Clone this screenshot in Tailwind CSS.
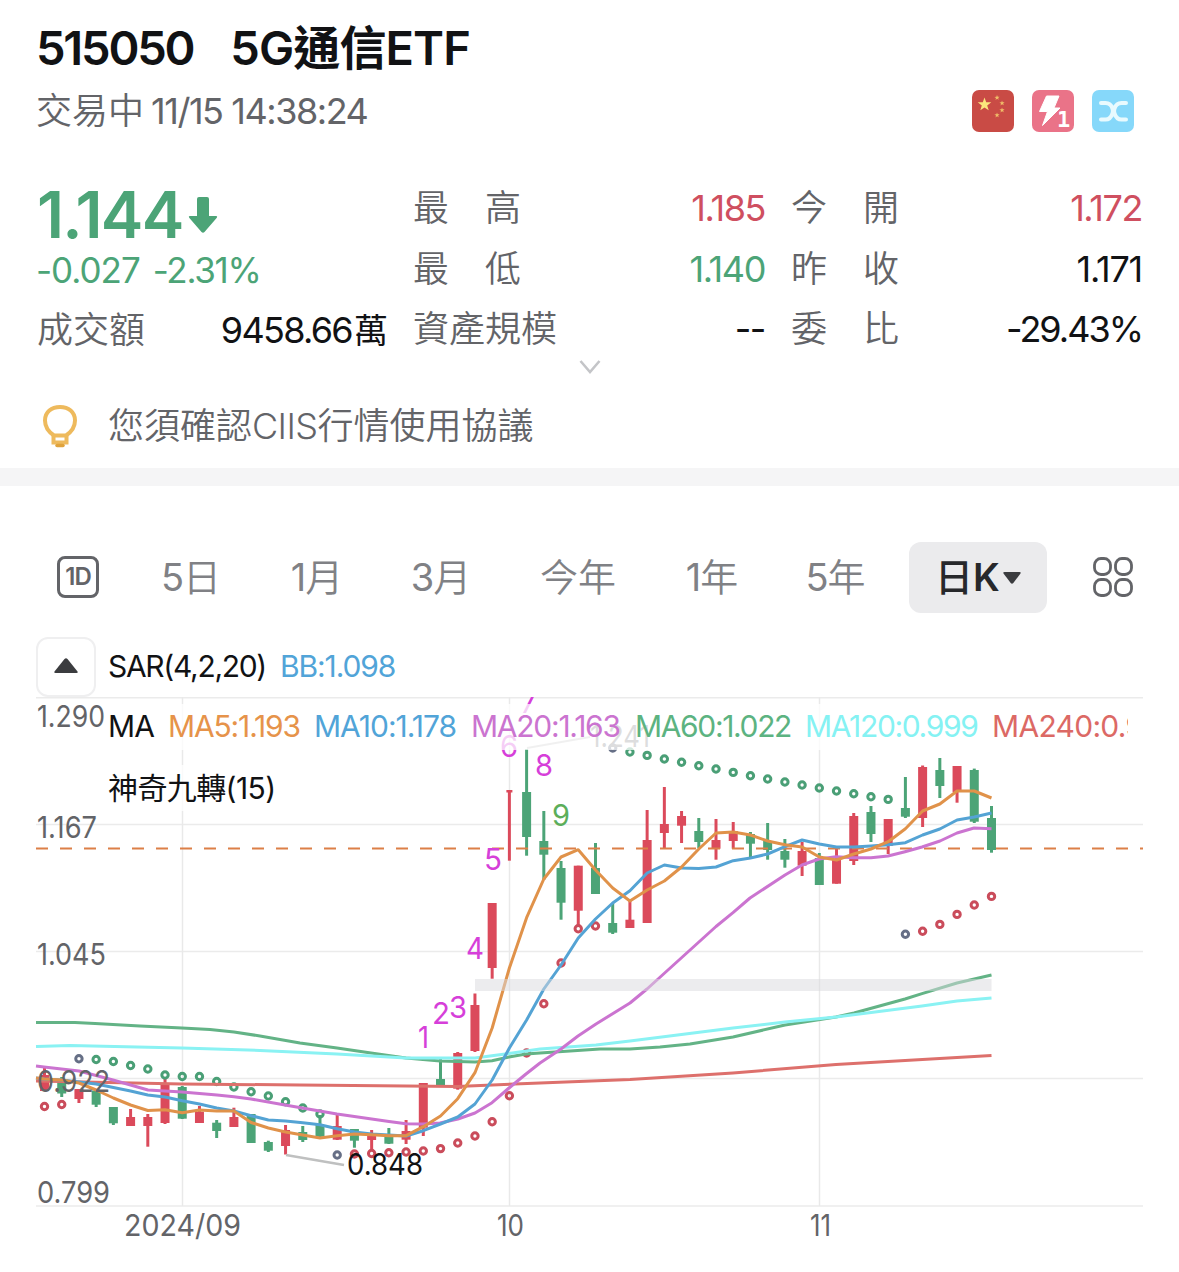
<!DOCTYPE html>
<html lang="zh-Hant">
<head>
    <meta charset="UTF-8">
    <meta name="viewport" content="width=device-width, initial-scale=1.0">
    <title>515050 5G通信ETF</title>
    <script src="https://cdn.jsdelivr.net/npm/@tailwindcss/browser@4"></script>
</head>
<body class="w-[1179px] h-[1272px] overflow-hidden bg-white text-[#111214] font-[Inter,'Noto_Sans_CJK_TC',sans-serif]">

    <!-- Header -->
    <header class="h-[178px] pt-[18px] pl-[36px] pr-[45px]">
      <h1 class="flex gap-[38px] h-[61px] items-center text-[47px] font-semibold whitespace-nowrap">
        <span class="tracking-[-2.2px]">515050</span>
        <span class="ml-[-1px] tracking-[-0.9px]">5G通信ETF</span>
      </h1>
      <div class="flex h-[64px] items-center justify-between">
        <p class="text-[36px] text-[#636468] whitespace-nowrap font-[350]">交易中<span class="ml-[7px] font-normal tracking-[-1.450px]">11/15 14:38:24</span></p>
        <div class="flex gap-[18px]">
          <svg class="size-[42px]" viewBox="0 0 42 42">
            <rect width="42" height="42" rx="7" fill="#c94b45"/>
            <path fill="#fbe67c" d="M12.500 7.500l1.700 4.800h5.100l-4.100 3.100 1.500 4.900-4.200-2.900-4.200 2.900 1.500-4.900-4.100-3.100h5.100z"/>
            <g fill="#f0bd68">
              <path d="M25 5l.7 1.800 1.900-.1-1.500 1.200.7 1.900-1.700-1-1.600 1.200.5-2-1.600-1.100 2-.1z"/>
              <path d="M30 10.500l.7 1.800 1.900-.1-1.500 1.200.7 1.900-1.700-1-1.600 1.200.5-2-1.600-1.100 2-.1z"/>
              <path d="M30 17.500l.7 1.800 1.900-.1-1.500 1.200.7 1.900-1.700-1-1.600 1.200.5-2-1.600-1.100 2-.1z"/>
              <path d="M25 22.500l.7 1.800 1.900-.1-1.500 1.200.7 1.900-1.700-1-1.600 1.200.5-2-1.600-1.100 2-.1z"/>
            </g>
          </svg>
          <svg class="size-[42px]" viewBox="0 0 42 42">
            <rect width="42" height="42" rx="7" fill="#ea7388"/>
            <path fill="#fff" stroke="#fff" stroke-width="1" stroke-linejoin="round" d="M14.500 6H27l-5 12h6L10.500 35.500 15.500 21.500H7.500z"/>
            <text x="25" y="37" font-size="22" font-weight="700" fill="#fff" font-family="DejaVu Sans Mono">1</text>
          </svg>
          <svg class="size-[42px]" viewBox="0 0 42 42" fill="none" stroke="#e9fafe" stroke-width="4" stroke-linecap="round">
            <rect width="42" height="42" rx="7" fill="#86d8fa" stroke="none"/>
            <path d="M9 13h4.500c4 0 6 2.500 7 5.500.6 1.700.6 3.300 0 5-1 3-3 6-7 6H9M34 13h-4.500c-4 0-6 2.500-7 5.500-.6 1.700-.6 3.300 0 5 1 3 3 6 7 6H34"/>
          </svg>
        </div>
      </div>
    </header>

    <!-- Quote -->
    <section class="grid grid-cols-[350px_352px_351px] gap-x-[26px] h-[182px] pl-[37px] text-[36px] whitespace-nowrap">
      <div class="flex flex-col">
        <div class="flex h-[62px] pt-[12px] items-center text-[#4ca477]">
          <span class="text-[64px] leading-none font-semibold tracking-[-1.700px]">1.144</span>
          <svg class="w-[30px] h-[36px] ml-[5px]" viewBox="0 0 28 36"><path fill="#4ca477" d="M8 2q0-2 2-2h8q2 0 2 2v17h7q2 0 .6 2L15.500 35q-1.500 1.500-3 0L.4 21q-1.400-2 .6-2h7z"/></svg>
        </div>
        <div class="flex h-[60px] items-center gap-[13px] ml-[-1px] text-[35px] text-[#4ca477]"><span class="tracking-[-1px]">-0.027</span><span class="tracking-[-1.300px]">-2.31%</span></div>
        <div class="flex h-[60px] items-center justify-between"><span class="text-[#636468] font-[350]">成交額</span><span class="mr-[-1px]"><span class="tracking-[-1.700px] mr-[2px]">9458.66</span><span class="text-[34px]">萬</span></span></div>
      </div>
      <div class="grid grid-rows-[60.5px_60.5px_60.5px] items-center">
        <div class="flex justify-between"><span class="text-[#636468] font-[350]">最　高</span><span class="text-[#cf4f60] tracking-[-1.4px]">1.185</span></div>
        <div class="flex justify-between"><span class="text-[#636468] font-[350]">最　低</span><span class="text-[#4ca477] tracking-[-1.4px]">1.140</span></div>
        <div class="flex justify-between"><span class="text-[#636468] font-[350]">資產規模</span><span class="tracking-[-1.4px]">--</span></div>
      </div>
      <div class="grid grid-rows-[60.5px_60.5px_60.5px] items-center">
        <div class="flex justify-between"><span class="text-[#636468] font-[350]">今　開</span><span class="text-[#cf4f60] tracking-[-1.4px]">1.172</span></div>
        <div class="flex justify-between"><span class="text-[#636468] font-[350]">昨　收</span><span class="tracking-[-1.2px]">1.171</span></div>
        <div class="flex justify-between"><span class="text-[#636468] font-[350]">委　比</span><span class="tracking-[-2px]">-29.43%</span></div>
      </div>
    </section>
    <div class="flex justify-center h-[18px]">
      <svg class="w-[22px] h-[14px]" viewBox="0 0 22 14" fill="none" stroke="#c4c5c8" stroke-width="2.600"><path d="M1.500 1l9.500 11L20.500 1"/></svg>
    </div>

    <!-- Notice -->
    <div class="flex h-[90px] items-center pl-[42px] pt-[5px] text-[36px] text-[#636468] font-[350]">
      <svg class="w-[36px] h-[44px] mr-[30px]" viewBox="0 0 36 44" fill="none" stroke="#eeba5d" stroke-width="4">
        <path d="M12 31.500C7.500 28.500 3 23.500 3 16.500 3 8 9.500 3 18 3s15 5 15 13.500c0 7-4.500 12-9 15z" stroke-linejoin="round"/>
        <path d="M11.500 31v7.500h13V31"/><path d="M15 41.500h6" stroke-width="3.500" stroke="#e0a33c" stroke-linecap="round"/>
      </svg>
      <span class="whitespace-nowrap">您須確認<span class="tracking-[-0.600px]">CIIS</span>行情使用協議</span>
    </div>
    <div class="h-[18px] bg-[#f5f5f6]"></div>

    <!-- Period tabs -->
    <nav class="flex h-[71px] mt-[56px] pl-[57px] items-center text-[38px] text-[#808185] font-[350] whitespace-nowrap">
      <span class="flex size-[42px] mt-[-1px] mr-[28.500px] border-[3px] border-[#636468] rounded-[8px] items-center justify-center text-[24px] font-semibold tracking-[-1px] text-[#636468]">1D</span>
      <span class="w-[126px] text-center tracking-[-1px]"><span class="font-normal">5</span>日</span>
      <span class="w-[126px] text-center tracking-[-1px]"><span class="font-normal">1</span>月</span>
      <span class="w-[122px] text-center tracking-[-1px]"><span class="font-normal">3</span>月</span>
      <span class="w-[153px] text-center">今年</span>
      <span class="w-[114px] text-center tracking-[-1px]"><span class="font-normal">1</span>年</span>
      <span class="w-[133px] text-center tracking-[-1px]"><span class="font-normal">5</span>年</span>
      <span class="flex w-[138px] h-[71px] ml-[7.500px] items-center justify-center rounded-[12px] bg-[#ebebed] text-[#27282b] font-medium">日<span class="font-semibold tracking-[-1.500px]">K</span>
        <svg class="w-[18px] h-[12px] ml-[5px]" viewBox="0 0 18 12"><path fill="#3b3c3f" d="M1.500 0h15q2 0 .8 1.700l-7 9.300q-1.300 1.500-2.600 0l-7-9.300Q-.5 0 1.500 0z"/></svg>
      </span>
      <svg class="size-[40px] ml-[46px] mt-[-1px]" viewBox="0 0 40 40" fill="none" stroke="#636468" stroke-width="2.800">
        <rect x="1.500" y="1.500" width="16" height="16" rx="6.500"/><rect x="22.500" y="1.500" width="16" height="16" rx="6.500"/>
        <rect x="1.500" y="22.500" width="16" height="16" rx="6.500"/><rect x="22.500" y="22.500" width="16" height="16" rx="6.500"/>
      </svg>
    </nav>

    <!-- Indicator line -->
    <div class="flex h-[60px] mt-[24px] pl-[36px] items-center text-[30px] whitespace-nowrap">
      <span class="flex w-[60px] h-[60px] mr-[12px] border-2 border-[#efeff0] rounded-[12px] items-center justify-center">
        <svg class="w-[24px] h-[15px] mt-[-3px]" viewBox="0 0 24 15"><path fill="#3b3c3f" d="M1.500 15h21q2 0 .8-1.700L13.500 1Q12 -.5 10.500 1L.7 13.300Q-.5 15 1.500 15z"/></svg>
      </span>
      <span class="w-[172px] pb-[2px] tracking-[-1.300px]">SAR(4,2,20)</span>
      <span class="pb-[2px] tracking-[-1.100px] text-[#51a4d8]">BB:1.098</span>
    </div>

    <!-- Chart -->
    <div class="relative h-[575px]">
      <svg id="chart" class="block w-[1179px] h-[575px]" viewBox="0 697 1179 575"></svg>
      <div class="absolute left-[108px] top-[7px] flex w-[1020px] h-[46px] pb-[2px] gap-[14px] items-center overflow-hidden bg-white/75 text-[30px] whitespace-nowrap">
        <span class="w-[46px] shrink-0 tracking-[-0.800px]">MA</span>
        <span class="w-[132px] shrink-0 tracking-[-1.150px] text-[#e6934a]">MA5:1.193</span>
        <span class="w-[143px] shrink-0 tracking-[-1px] text-[#51a4d8]">MA10:1.178</span>
        <span class="w-[150px] shrink-0 tracking-[-1.250px] text-[#cb74d0]">MA20:1.163</span>
        <span class="w-[156px] shrink-0 tracking-[-1.350px] text-[#5cb381]">MA60:1.022</span>
        <span class="w-[173px] shrink-0 tracking-[-1.350px] text-[#85f2f3]">MA120:0.999</span>
        <span class="w-[173px] shrink-0 tracking-[-0.700px] text-[#dc6965]">MA240:0.955</span>
      </div>
      <div class="absolute left-[108px] top-[68px] h-[46px] leading-[46px] bg-white/75 text-[30px] tracking-[-0.600px] whitespace-nowrap">神奇九轉(15)</div>
    </div>

    <script>
        const RED = "#db4a5b", GREEN = "#4ca477", SLATE = "#666f86";
        const xAt = i => 44.5 + i * 17.218;

        // [up?, wick top, body top, body bottom, wick bottom]
        const candles = [
          [1,1068,1075,1091,1091],[0,1077,1081,1093.5,1097],[1,1089,1089,1099,1103],[0,1090,1090.5,1104.7,1107],
          [0,1107,1107,1123.3,1125],[1,1109,1117,1126,1126],[1,1114,1117,1126,1146.7],[1,1079,1084,1123,1124],
          [0,1086,1087,1118.7,1119],[1,1106,1111.7,1123,1123],[0,1120,1122.7,1131,1138],[1,1107.7,1117,1127,1127],
          [0,1114,1114,1143,1143],[0,1140.7,1142,1150.7,1152],[1,1125,1130,1146,1154.5],[0,1126,1132,1140,1142],
          [0,1115,1125,1136.7,1137],[1,1115,1126,1139.7,1140],[0,1129,1129,1140.7,1147.7],[1,1130,1135,1140,1151],
          [0,1128,1135,1143.7,1144],[1,1120,1131,1139.7,1144],[1,1083,1083,1127.7,1136],[0,1059,1079,1087,1087],
          [1,1052,1053,1088.7,1089.7],[1,993.5,1005,1051,1052],[1,903,903,968,978.7],[1,790,790,792.5,860.7],
          [0,749,792,837,855.7],[0,811,841,854.7,880],[0,861,868,902.7,919.7],[1,865.7,865.7,910.7,925],
          [0,843,868,894,894],[0,903,923,932.7,934],[1,901,919.7,928,928],[1,810,840,923,923],
          [1,787,824,833,849],[1,811,816,825.7,843],[0,818,831,842,848],[1,819,840,848.7,859.7],
          [1,822,831,841,848.7],[0,832,834,843.7,858],[0,823,841,850,859.7],[0,839,851,859.7,867.7],
          [1,842,851,865.7,876],[0,853,858,885,885],[1,849,859,883.7,883.7],[1,813,816,861,865],
          [0,806,812,834,842],[1,819,819,846,854],[0,777,808,816.7,818],[1,765.5,767,818,827],
          [0,758,770,786,798],[1,766,766,792,802.7],[0,768.6,770,821.7,823],[0,806,818,850,852.7]
        ];

        // parabolic SAR, one value per candle
        const sar = [
          1106.5,1104.5,1058.7,1059.5,1061.5,1065.5,1069,1075,1076.5,1076.5,1081.5,1087,1091.8,1096,1101.7,1108,1114,
          1155,1154,1153.5,1152.7,1152,1151,1148.6,1143,1136,1121.7,1095.7,1053,1003.7,963,928.7,926,
          748,752,755.4,759,762.3,765.7,769,772.4,775.7,779,782,785,788,791,793.7,796.7,799.4,
          934.3,931.3,924.4,914.4,905,896.4
        ];
        const flips = [2, 17, 33, 50];
        const sarColor = i => {
          if (flips.includes(i)) return SLATE;
          return (i > 2 && i < 17) || (i > 33 && i < 50) ? "#4a9f76" : "#ca4c5b";
        };

        const ma5 = [1079,1080,1083,1090,1098,1105,1110.5,1109.7,1112.7,1110,1111,1111,1122.5,1128,1132,1135,1138,1135.7,1134,1134.7,1135.7,1135.7,1126.7,1116,1098.7,1072.7,1028,968,917.7,879,857,849.7,870,888,901,890,881,867,849,833,832,835,841,844.7,847,857,860,854,849,841.7,828.7,811,804,791,791,798];
        const ma10 = [1079,1080,1082,1084,1087.5,1091,1095,1097,1100.7,1104,1108,1111,1115.7,1120,1121,1122.7,1124.7,1128.7,1132,1134,1135,1136,1130.7,1124,1117,1104,1080,1048,1020,989,965,938,919,903,890.7,873,865,868,868.5,867,860.7,858,854,846.7,840,844,847,847,846,844.7,842.7,835,829,820,817,813];
        const toPoints = a => a.map((y, i) => xAt(i) + "," + y).join(" ");

        const lines = [
          ["#dd706c", "36,1081 182,1084 300,1085 406,1086 457,1086.5 540,1083 630,1079.5 733,1073 836,1064.5 991.5,1055.5"],
          ["#63b386", "36,1022.5 75,1022.5 95,1023.5 140,1026 182,1028 210,1029.5 234,1032 260,1036 300,1043 337,1048 371,1053 406,1058 440,1061 475,1062 492,1060.7 509,1057 526,1054 540,1053 600,1049 630,1049 660,1047 690,1044 733,1037 785,1025 836,1017 854,1013 905,999 922,993.6 957,983 991.5,975"],
          ["#8af2f3", "36,1046.5 70,1045.5 182,1048 260,1050.5 337,1054 406,1058 475,1058 509,1053.5 540,1049 596,1045 630,1041 733,1028 785,1022 836,1017 922,1006 957,1001 991.5,998"],
          ["#cb74d0", "36,1066 44,1067 79,1071 113,1080 148,1090 182,1092 217,1095 234,1096.7 251,1099 285,1105 337,1114 389,1121.5 406,1123.7 423,1124 440,1123 458,1119 475,1113 492,1102.7 509,1088 526,1074 540,1063 561,1049 578,1036 596,1024 630,1003 647,989 700,941 716,926.5 733,912.7 750,898 785,875 802,865 819,859 836,856.7 854,857.7 871,857.7 888,856 905,851.7 922,847 940,841 957,833 974,828 991.5,828.7"],
          ["#54a3d4", "36,1078 " + toPoints(ma10)],
          ["#e0924a", "36,1078 " + toPoints(ma5)]
        ];

        let svg = "";

        // grid
        [697, 824.5, 951.5, 1078.5, 1206].forEach(y => { svg += `<path d="M36 ${y}H1143" stroke="#ebebeb" stroke-width="${y === 697 ? 3 : 1.5}"/>`; });
        [182.5, 509.5, 819.5].forEach(x => { svg += `<path d="M${x} 697V1206" stroke="#e9e9e9" stroke-width="1.5"/>`; });

        candles.forEach(([up, wt, bt, bb, wb], i) => {
          const x = xAt(i), c = up ? RED : GREEN, w = i === 27 ? 6 : 9;
          svg += `<path d="M${x} ${wt}V${wb}" stroke="${c}" stroke-width="3"/><rect x="${x - w / 2}" y="${bt}" width="${w}" height="${bb - bt}" fill="${c}"/>`;
        });
        sar.forEach((y, i) => { svg += `<circle cx="${xAt(i)}" cy="${y}" r="3.2" fill="none" stroke="${sarColor(i)}" stroke-width="3"/>`; });
        svg += `<path d="M36 848.5H1143" stroke="#dc7f47" stroke-width="2.2" stroke-dasharray="12 12"/>`;
        lines.forEach(([c, p]) => { svg += `<polyline points="${p}" fill="none" stroke="${c}" stroke-width="3" stroke-linejoin="round"/>`; });

        // gap band
        svg += `<rect x="475" y="979" width="516.5" height="12" fill="#d9d9dd" fill-opacity=".5"/>`;
        // high / low pointers
        svg += `<path d="M286 1155L344 1165" stroke="#bfc0c0" stroke-width="2.5"/><path d="M527 748L590 737" stroke="#c4c4c4" stroke-width="2"/>`;

        // [text, x, baseline, width, colour]
        const labels = [
          ["1.290",37,727,68,"#636468"],["1.167",37,838,60,"#636468"],["1.045",37,965,69,"#636468"],["0.922",37,1092,73,"#636468"],["0.799",37,1203,73,"#636468"],
          ["2024/09",124,1236,117,"#636468"],["10",497,1236,27,"#636468"],["11",810,1236,21,"#636468"],
          ["0.848",347,1175,76,"#111214"],["1.241",590,747,60,"#77797c"],
          ["1",418,1048,11,"#d63fd9"],["2",432,1024,18,"#d63fd9"],["3",449,1018,18,"#d63fd9"],["4",466,959,18,"#d63fd9"],["5",484,870,18,"#d63fd9"],
          ["6",500,757,18,"#d63fd9"],["7",520,713,17,"#d63fd9"],["8",535,776,18,"#d63fd9"],["9",552,826,18,"#5cae5a"]
        ];
        labels.forEach(([t, x, y, w, c]) => {
          svg += `<text x="${x}" y="${y}" textLength="${w}" lengthAdjust="spacingAndGlyphs" font-size="30" fill="${c}">${t}</text>`;
        });

        document.getElementById("chart").innerHTML = svg;
    </script>
</body>
</html>
